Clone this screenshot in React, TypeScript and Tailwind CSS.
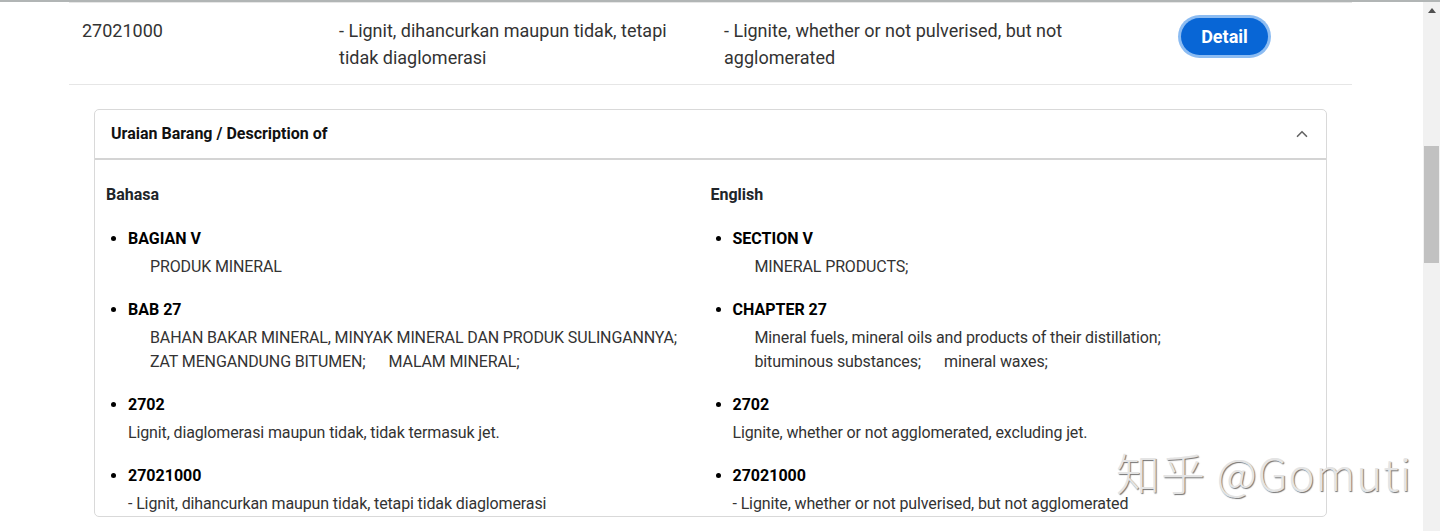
import { ChevronUp } from 'lucide-react';

type Entry = {
  title: string;
  lines: string[][];
  indent?: boolean;
};

const bahasa: Entry[] = [
  { title: 'BAGIAN V', lines: [['PRODUK MINERAL']], indent: true },
  {
    title: 'BAB 27',
    lines: [
      ['BAHAN BAKAR MINERAL, MINYAK MINERAL DAN PRODUK SULINGANNYA;'],
      ['ZAT MENGANDUNG BITUMEN;', 'MALAM MINERAL;'],
    ],
    indent: true,
  },
  { title: '2702', lines: [['Lignit, diaglomerasi maupun tidak, tidak termasuk jet.']] },
  { title: '27021000', lines: [['- Lignit, dihancurkan maupun tidak, tetapi tidak diaglomerasi']] },
];

const english: Entry[] = [
  { title: 'SECTION V', lines: [['MINERAL PRODUCTS;']], indent: true },
  {
    title: 'CHAPTER 27',
    lines: [
      ['Mineral fuels, mineral oils and products of their distillation;'],
      ['bituminous substances;', 'mineral waxes;'],
    ],
    indent: true,
  },
  { title: '2702', lines: [['Lignite, whether or not agglomerated, excluding jet.']] },
  { title: '27021000', lines: [['- Lignite, whether or not pulverised, but not agglomerated']] },
];

function DescColumn({ heading, items }: { heading: string; items: Entry[] }) {
  return (
    <div>
      <h3 className="text-base font-bold leading-6 text-[#212529]">{heading}</h3>
      <ul className="mt-5 list-disc pl-[22px]">
        {items.map((item, i) => (
          <li key={item.title} className={i === items.length - 1 ? '' : 'mb-[19px]'}>
            <div className="font-bold leading-6 text-black">{item.title}</div>
            <div
              className={`mt-1 leading-6 tracking-[-0.13px] text-[#333] ${item.indent ? 'pl-[22px]' : ''}`}
            >
              {item.lines.map((parts, j) => (
                <div key={j}>
                  {parts.map((p, k) => (
                    <span key={k} className={k > 0 ? 'ml-[23px]' : ''}>
                      {p}
                    </span>
                  ))}
                </div>
              ))}
            </div>
          </li>
        ))}
      </ul>
    </div>
  );
}

export default function App() {
  return (
    <div
      className="relative h-[531px] overflow-hidden bg-white"
      style={{ fontFamily: 'Roboto, "Noto Sans", sans-serif' }}
    >
      <div className="h-[2px] bg-[#b1b5b5]" />
      <div className="flex h-[529px]">
        <div className="flex-1">
          <div className="mx-[69px] mr-[71px]">
            {/* table row */}
            <div className="grid grid-cols-[257px_385px_454px_1fr] border-y border-[#e6e6e6] pb-[13px] pt-[14px] text-lg leading-[27px] text-[#333]">
              <div className="px-[13px]">27021000</div>
              <div className="px-[13px]">- Lignit, dihancurkan maupun tidak, tetapi tidak diaglomerasi</div>
              <div className="px-[13px]">- Lignite, whether or not pulverised, but not agglomerated</div>
              <div className="px-[13px]">
                <button
                  type="button"
                  className="ml-[3px] mt-[1px] h-[37px] w-[87px] rounded-full bg-[#0866d6] text-lg font-bold text-white ring-[3px] ring-[#8cbcf2]"
                >
                  Detail
                </button>
              </div>
            </div>

            {/* accordion */}
            <div className="mx-[25px] mt-[24px] h-[408px] overflow-hidden rounded-[5px] border border-[#d9d9d9]">
              <div className="flex h-[50px] items-center justify-between border-b-2 border-[#d4d4d4] pl-4 pr-[15px]">
                <span className="text-base font-bold text-[#111]">Uraian Barang / Description of</span>
                <ChevronUp className="h-[18px] w-[18px] text-[#666]" strokeWidth={2.2} />
              </div>
              <div className="grid grid-cols-2 px-[11px] pt-[23px] text-base">
                <DescColumn heading="Bahasa" items={bahasa} />
                <DescColumn heading="English" items={english} />
              </div>
            </div>
          </div>
        </div>

        {/* scrollbar */}
        <div className="flex w-[17px] flex-col items-center bg-[#f1f1f1]">
          <div className="mt-[6px] h-0 w-0 border-x-[4px] border-b-[5px] border-x-transparent border-b-[#505050]" />
          <div className="mt-[133px] h-[117px] w-[15px] bg-[#c1c1c1]" />
        </div>
      </div>

      {/* watermark */}
      <div
        className="pointer-events-none absolute left-[1116px] top-[442px] text-[44px] font-light leading-[60px] tracking-[1px] text-[#e4e4e4] [text-shadow:1px_1px_1px_rgba(0,0,0,0.55)]"
        style={{ fontFamily: '"Noto Sans CJK SC", sans-serif' }}
      >
        知乎 @Gomuti
      </div>
    </div>
  );
}
